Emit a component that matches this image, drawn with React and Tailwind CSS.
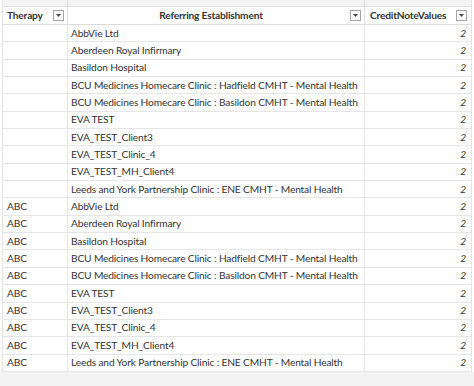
import React from 'react';

const places = [
  'AbbVie Ltd',
  'Aberdeen Royal Infirmary',
  'Basildon Hospital',
  'BCU Medicines Homecare Clinic : Hadfield CMHT - Mental Health',
  'BCU Medicines Homecare Clinic : Basildon CMHT - Mental Health',
  'EVA TEST',
  'EVA_TEST_Client3',
  'EVA_TEST_Clinic_4',
  'EVA_TEST_MH_Client4',
  'Leeds and York Partnership Clinic : ENE CMHT - Mental Health',
];

const rows = [
  ...places.map((p) => ({ therapy: '', place: p, value: 2 })),
  ...places.map((p) => ({ therapy: 'ABC', place: p, value: 2 })),
];

function FilterButton() {
  return (
    <span className="flex items-center justify-center w-[11px] h-[11px] border border-[#a6a6a6] bg-white">
      <svg width="5" height="3" viewBox="0 0 5 3">
        <path d="M0 0 L5 0 L2.5 3 Z" fill="#444" />
      </svg>
    </span>
  );
}

export default function App() {
  return (
    <div
      className="w-[474px] h-[386px] bg-white overflow-hidden text-[10.2px] tracking-[-0.15px] text-[#333]"
      style={{ fontFamily: 'Lato, "Noto Sans", sans-serif' }}
    >
      <div className="ml-[2px] w-[470px] border-l border-r border-[#e4e4e4]">
        {/* scrolled-off header strip */}
        <div className="grid grid-cols-[65px_297px_1fr] h-[7px] bg-[#f3f3f3] border-b border-[#e1e1e1]">
          <div className="border-r border-[#dcdcdc]" />
          <div className="border-r border-[#dcdcdc]" />
          <div />
        </div>

        {/* header */}
        <div className="grid grid-cols-[65px_297px_1fr] h-[18px] border-b border-[#dcdcdc] font-bold text-[10.2px] tracking-[-0.2px] text-[#333]">
          <div className="flex items-center justify-between pl-[4px] pr-[3px] border-r border-[#dcdcdc]">
            <span>Therapy</span>
            <FilterButton />
          </div>
          <div className="relative flex items-center justify-center border-r border-[#dcdcdc]">
            <span className="pr-[10px]">Referring Establishment</span>
            <span className="absolute right-[3px] top-[3px]">
              <FilterButton />
            </span>
          </div>
          <div className="flex items-center justify-between pl-[5px] pr-[4px]">
            <span>CreditNoteValues</span>
            <FilterButton />
          </div>
        </div>

        {/* body */}
        {rows.map((r, i) => (
          <div
            key={i}
            className="grid grid-cols-[65px_297px_1fr] h-[17.35px] border-b border-[#e6e6e6]"
          >
            <div className="flex items-center pl-[4px] border-r border-[#e6e6e6]">{r.therapy}</div>
            <div className="flex items-center pl-[3px] border-r border-[#e6e6e6] whitespace-nowrap overflow-hidden">
              {r.place}
            </div>
            <div className="flex items-center justify-end pr-[5px] italic">{r.value}</div>
          </div>
        ))}
      </div>
      <div className="h-[20px] bg-[#f3f3f3]" />
    </div>
  );
}
